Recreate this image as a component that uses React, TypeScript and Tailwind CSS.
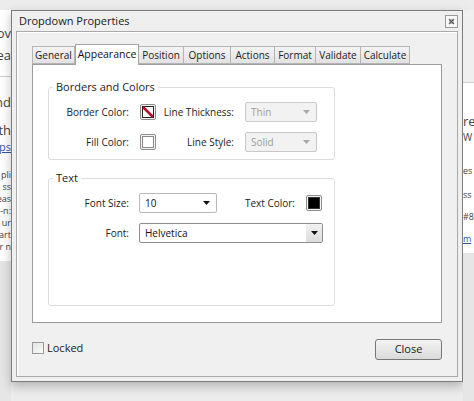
import React from "react";

const font = { fontFamily: '"Open Sans", "Noto Sans", sans-serif' };

function Arrow({ dim }: { dim?: boolean }) {
  return (
    <svg width="7" height="4" viewBox="0 0 7 4" className="shrink-0">
      <path d="M0 0h7L3.5 4z" fill={dim ? "#a8a8a8" : "#111"} />
    </svg>
  );
}

function DisabledSelect({ value }: { value: string }) {
  return (
    <div className="ml-[11px] flex h-[20px] w-[72px] items-center justify-between rounded-[2px] border border-[#c9c9c9] bg-[#f2f2f2] pl-[5px] pr-[6px] text-[#9d9d9d]">
      <span>{value}</span>
      <Arrow dim />
    </div>
  );
}

function Swatch({ children }: { children: React.ReactNode }) {
  return (
    <div className="ml-[11px] flex h-[16px] w-[16px] items-center justify-center rounded-[2px] border border-[#8e8e8e] bg-[#f4f4f4]">
      {children}
    </div>
  );
}

function Label({ w, children }: { w: string; children: React.ReactNode }) {
  return <div className={`${w} shrink-0 text-right text-[#222]`}>{children}</div>;
}

const tabs = [
  { label: "General", w: "w-[43px]" },
  { label: "Appearance", w: "w-[64px]" },
  { label: "Position", w: "w-[45px]" },
  { label: "Options", w: "w-[47px]" },
  { label: "Actions", w: "w-[44px]" },
  { label: "Format", w: "w-[41px]" },
  { label: "Validate", w: "w-[45px]" },
  { label: "Calculate", w: "w-[49px]" },
];

function Tab({ label, w, active }: { label: string; w: string; active?: boolean }) {
  if (active) {
    return (
      <div className={`${w} relative z-10 -mb-px flex h-[21px] items-center justify-center border border-b-0 border-[#a4a4a4] bg-white text-[10.5px] text-[#111]`}>
        {label}
      </div>
    );
  }
  return (
    <div className={`${w} flex h-[18px] items-center justify-center border border-l-0 border-[#b4b4b4] bg-gradient-to-b from-[#f4f4f4] to-[#e2e2e2] text-[#222] first:border-l`}>
      {label}
    </div>
  );
}

function Group({ title, className, children }: { title: string; className?: string; children: React.ReactNode }) {
  return (
    <fieldset className={`ml-[15px] w-[287px] rounded-[3px] border border-[#dcdcdc] ${className ?? ""}`}>
      <legend className="ml-[4px] px-[3px] text-[11px] leading-[14px] text-[#222]">{title}</legend>
      {children}
    </fieldset>
  );
}

export default function App() {
  return (
    <div className="h-[401px] w-[474px] overflow-hidden bg-[#ececec] text-[10px]" style={font}>
      <div className="flex pt-[10px]">
        {/* page behind, left */}
        <div className="flex w-[11px] shrink-0 flex-col items-end overflow-hidden bg-white text-[#444]">
          <div className="mt-[15px] text-[13px] leading-[16px]">ov</div>
          <div className="mt-[6px] text-[13px] leading-[16px]">ea</div>
          <div className="mt-[13px] h-px w-full bg-[#cfcfcf]" />
          <div className="mt-[17px] text-[13px] leading-[16px]">nd</div>
          <div className="mt-[13px] text-[13px] leading-[15px]">th</div>
          <div className="mt-[2px] text-[11px] leading-[13px] text-[#3355aa] underline">tps</div>
          <div className="mt-[16px] flex flex-col items-end text-[9px] leading-[12px]">
            <span>pli</span>
            <span>ss</span>
            <span>eas</span>
            <span>-n:</span>
            <span>ur</span>
            <span>art</span>
            <span>r n</span>
          </div>
          <div className="mt-[8px] h-[200px] w-full bg-[#e6e6e6]" />
        </div>

        {/* dialog */}
        <div className="flex h-[372px] w-[452px] shrink-0 flex-col border border-[#7d7d7d] bg-[#efefef] px-[4px] pb-[4px] shadow-[0_4px_10px_rgba(0,0,0,0.25)]">
          <div className="flex h-[20px] items-center justify-between pl-[3px]">
            <span className="text-[11px] text-[#1a1a1a]">Dropdown Properties</span>
            <div className="flex h-[13px] w-[13px] items-center justify-center border border-[#9a9a9a] bg-[#f7f7f7]">
              <svg width="7" height="7" viewBox="0 0 7 7">
                <path d="M1 1l5 5M6 1L1 6" stroke="#555" strokeWidth="1.2" />
                <rect x="1.5" y="1.5" width="4" height="4" fill="none" stroke="#888" strokeWidth="0.6" />
              </svg>
            </div>
          </div>

          <div className="flex flex-1 flex-col border border-[#a9a9a9] bg-[#f0f0f0] px-[15px] pt-[12px] shadow-[inset_1px_1px_0_#ffffff]">
            <div className="flex items-end">
              {tabs.map((t) => (
                <Tab key={t.label} label={t.label} w={t.w} active={t.label === "Appearance"} />
              ))}
            </div>

            <div className="h-[259px] w-[410px] border border-[#9c9c9c] bg-white pt-[15px]">
              <Group title="Borders and Colors" className="pb-[7px] pt-[8px]">
                <div className="flex flex-col gap-[10px]">
                  <div className="flex h-[20px] items-center">
                    <Label w="w-[80px]">Border Color:</Label>
                    <Swatch>
                      <svg width="12" height="12" viewBox="0 0 12 12">
                        <rect x="0.5" y="0.5" width="11" height="11" fill="#fff" stroke="#222" />
                        <path d="M1 1l10 10" stroke="#b3122c" strokeWidth="2.6" />
                      </svg>
                    </Swatch>
                    <Label w="w-[78px]">Line Thickness:</Label>
                    <DisabledSelect value="Thin" />
                  </div>
                  <div className="flex h-[20px] items-center">
                    <Label w="w-[80px]">Fill Color:</Label>
                    <Swatch>
                      <div className="h-[12px] w-[12px] border border-[#8a8a8a] bg-white" />
                    </Swatch>
                    <Label w="w-[78px]">Line Style:</Label>
                    <DisabledSelect value="Solid" />
                  </div>
                </div>
              </Group>

              <Group title="Text" className="mt-[11px] pb-[62px] pt-[8px]">
                <div className="flex flex-col gap-[10px]">
                  <div className="flex h-[20px] items-center">
                    <Label w="w-[80px]">Font Size:</Label>
                    <div className="ml-[10px] flex h-[20px] w-[78px] items-center justify-between rounded-[2px] border border-[#b9b9b9] bg-white pl-[5px] pr-[6px] text-[#111]">
                      <span>10</span>
                      <Arrow />
                    </div>
                    <Label w="w-[78px]">Text Color:</Label>
                    <Swatch>
                      <div className="h-[12px] w-[12px] border border-[#333] bg-black" />
                    </Swatch>
                  </div>
                  <div className="flex h-[20px] items-center">
                    <Label w="w-[80px]">Font:</Label>
                    <div className="ml-[10px] flex h-[20px] w-[184px] items-center justify-between rounded-[2px] border border-[#8d8d8d] bg-white pl-[5px] text-[#111]">
                      <span>Helvetica</span>
                      <div className="flex h-full w-[16px] items-center justify-center bg-gradient-to-b from-[#f2f2f2] to-[#dcdcdc]">
                        <Arrow />
                      </div>
                    </div>
                  </div>
                </div>
              </Group>
            </div>

            <div className="mt-[16px] flex items-center justify-between">
              <label className="flex items-center gap-[3px] text-[#222]">
                <span className="-mt-[3px] h-[12px] w-[12px] border border-[#9a9a9a] bg-gradient-to-br from-[#e4e4e4] to-[#fafafa]" />
                <span className="-mt-[3px] text-[11px]">Locked</span>
              </label>
              <button className="h-[21px] w-[67px] rounded-[3px] border border-[#777] bg-gradient-to-b from-[#f4f4f4] to-[#dadada] text-[11px] text-[#222]">
                Close
              </button>
            </div>
          </div>
        </div>

        {/* page behind, right */}
        <div className="flex w-[11px] shrink-0 flex-col overflow-hidden bg-white text-[#444]">
          <div className="h-[72px] w-full bg-[#efefef]" />
          <div className="h-px w-full bg-[#cfcfcf]" />
          <div className="mt-[31px] text-[13px] leading-[15px]">re</div>
          <div className="mt-[2px] text-[10px] leading-[12px]">W</div>
          <div className="mt-[22px] text-[9px] leading-[12px]">es</div>
          <div className="mt-[12px] text-[9px] leading-[12px]">ss</div>
          <div className="mt-[10px] text-[9px] leading-[12px]">#8</div>
          <div className="mt-[10px] text-[9px] leading-[12px] text-[#3355aa] underline">m</div>
          <div className="mt-[8px] h-[200px] w-full bg-[#e6e6e6]" />
        </div>
      </div>
    </div>
  );
}
